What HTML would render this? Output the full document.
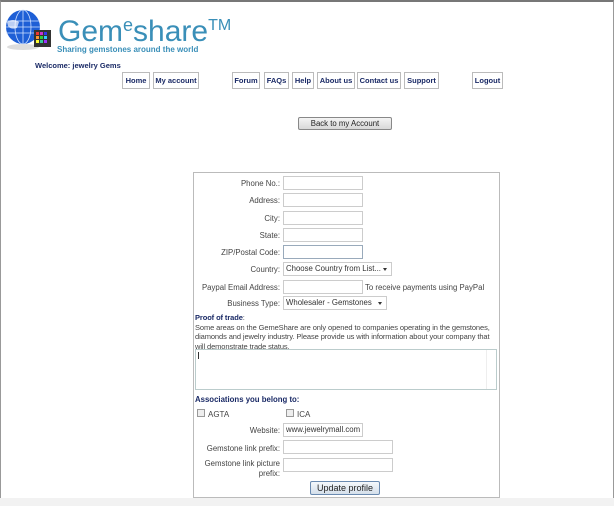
<!DOCTYPE html>
<html><head><style>
*{margin:0;padding:0;box-sizing:border-box}
body{width:614px;height:506px;background:#fff;font-family:"Liberation Sans",Arial,sans-serif;font-size:8px;color:#333;position:relative;overflow:hidden}
.frame{position:absolute;left:0;top:0;width:614px;height:498px;border-top:2px solid #777;border-left:1px solid #999;border-right:1px solid #999}
.foot{position:absolute;left:0;top:498px;width:614px;height:8px;background:#f2f2f2}
.a{position:absolute}
.nav{position:absolute;top:72px;height:17px;border:1px solid #bbb;background:#fff;font-weight:bold;color:#1a2a66;font-size:7.5px;line-height:15px;text-align:center}
.lbl{position:absolute;right:334px;font-size:7.8px;color:#444;text-align:right}
.in{position:absolute;left:283px;width:80px;height:14px;border:1px solid #ccc;background:#fff;font-size:7.8px;padding-left:2px;line-height:12px}
.sel{position:absolute;left:283px;height:14px;border:1px solid #ccc;background:#fff;font-size:7.8px;padding-left:2px;line-height:12px}
.sel:after{content:"";position:absolute;right:4px;top:5px;border-left:2.5px solid transparent;border-right:2.5px solid transparent;border-top:3px solid #333}
.btn{position:absolute;border:1px solid #888;border-radius:2px;background:linear-gradient(#f4f4f4,#d8d8d8);font-size:8px;text-align:center;color:#222}
.cb{position:absolute;width:8px;height:8px;border:1px solid #999;background:#eee}
</style></head><body>
<div class="frame"></div>
<div class="foot"></div>
<svg class="a" style="left:3px;top:6px" width="50" height="46" viewBox="0 0 50 46">
<circle cx="20" cy="21" r="17" fill="#1e5fd6"/>
<g stroke="#cfe0ff" stroke-width="0.8" fill="none"><ellipse cx="20" cy="21" rx="8" ry="17"/><line x1="20" y1="4" x2="20" y2="38"/><line x1="3" y1="15" x2="37" y2="15"/><line x1="3" y1="21" x2="37" y2="21"/><line x1="3" y1="27" x2="37" y2="27"/></g>
<path d="M4 16 Q10 12 16 16 L14 22 Q8 24 5 20Z" fill="#fff" opacity=".7"/>
<ellipse cx="20" cy="41" rx="16" ry="3" fill="#ddd"/>
<rect x="31" y="24" width="17" height="17" fill="#333"/>
<g><rect x="33" y="26" width="3" height="3" fill="#e33"/><rect x="37" y="26" width="3" height="3" fill="#c3c"/><rect x="41" y="26" width="3" height="3" fill="#33e"/><rect x="33" y="30" width="3" height="3" fill="#f93"/><rect x="37" y="30" width="3" height="3" fill="#3c3"/><rect x="41" y="30" width="3" height="3" fill="#3cf"/><rect x="33" y="34" width="3" height="3" fill="#ff3"/><rect x="37" y="34" width="3" height="3" fill="#3c9"/><rect x="41" y="34" width="3" height="3" fill="#93f"/></g>
</svg>
<div class="a" style="left:58px;top:9px;font-size:30px;color:#3a8fb8;line-height:32px;white-space:nowrap">Gem<sup style="font-size:18px;vertical-align:10px">e</sup>share<sup style="font-size:16px;vertical-align:11px">TM</sup></div>
<div class="a" style="left:57px;top:45px;font-size:8px;font-weight:bold;color:#3a8fb8">Sharing gemstones around the world</div>
<div class="a" style="left:35px;top:61px;font-size:7.5px;font-weight:bold;color:#1a2a66">Welcome: jewelry Gems</div>
<div class="nav" style="left:122px;width:28px">Home</div>
<div class="nav" style="left:153px;width:46px">My account</div>
<div class="nav" style="left:232px;width:28px">Forum</div>
<div class="nav" style="left:264px;width:25px">FAQs</div>
<div class="nav" style="left:292px;width:22px">Help</div>
<div class="nav" style="left:317px;width:38px">About us</div>
<div class="nav" style="left:357px;width:44px">Contact us</div>
<div class="nav" style="left:404px;width:35px">Support</div>
<div class="nav" style="left:472px;width:31px">Logout</div>
<div class="btn" style="left:298px;top:117px;width:94px;height:13px;line-height:11px;font-size:7.8px">Back to my Account</div>

<div class="a" style="left:193px;top:172px;width:307px;height:326px;border:1px solid #bbb"></div>
<div class="lbl" style="top:179px">Phone No.:</div><div class="in" style="top:176px"></div>
<div class="lbl" style="top:196px">Address:</div><div class="in" style="top:193px"></div>
<div class="lbl" style="top:214px">City:</div><div class="in" style="top:211px"></div>
<div class="lbl" style="top:231px">State:</div><div class="in" style="top:228px"></div>
<div class="lbl" style="top:248px">ZIP/Postal Code:</div><div class="in" style="top:245px;border-color:#9ab"></div>
<div class="lbl" style="top:265px">Country:</div><div class="sel" style="top:262px;width:109px">Choose Country from List...</div>
<div class="lbl" style="top:283px">Paypal Email Address:</div><div class="in" style="top:280px"></div>
<div class="a" style="left:365px;top:283px;color:#444;font-size:7.8px">To receive payments using PayPal</div>
<div class="lbl" style="top:299px">Business Type:</div><div class="sel" style="top:296px;width:104px">Wholesaler - Gemstones</div>
<div class="a" style="left:195px;top:313px;width:304px;line-height:9.5px;color:#444;font-size:7.5px;letter-spacing:-0.1px"><b style="color:#1a2a66">Proof of trade</b>:<br>Some areas on the GemeShare are only opened to companies operating in the gemstones, diamonds and jewelry industry. Please provide us with information about your company that will demonstrate trade status.</div>
<div class="a" style="left:195px;top:349px;width:302px;height:41px;border:1px solid #bcc"><div class="a" style="right:0;top:0;width:10px;height:39px;border-left:1px solid #eee"></div><div class="a" style="left:2px;top:2px;width:1px;height:7px;background:#333"></div></div>
<div class="a" style="left:195px;top:395px;font-weight:bold;color:#1a2a66;font-size:7.8px">Associations you belong to:</div>
<div class="cb" style="left:197px;top:409px"></div><div class="a" style="left:208px;top:410px;color:#444">AGTA</div>
<div class="cb" style="left:286px;top:409px"></div><div class="a" style="left:297px;top:410px;color:#444">ICA</div>
<div class="lbl" style="top:426px">Website:</div><div class="in" style="top:423px;color:#333">www.jewelrymall.com</div>
<div class="lbl" style="top:444px">Gemstone link prefix:</div><div class="in" style="top:440px;width:110px"></div>
<div class="lbl" style="top:459px;line-height:10px;width:80px">Gemstone link picture prefix:</div><div class="in" style="top:458px;width:110px"></div>
<div class="btn" style="left:310px;top:481px;width:70px;height:14px;line-height:12px;font-size:9px;border-color:#6a8ab0;background:linear-gradient(#f4f8fc,#d4dfea)">Update profile</div>
</body></html>
